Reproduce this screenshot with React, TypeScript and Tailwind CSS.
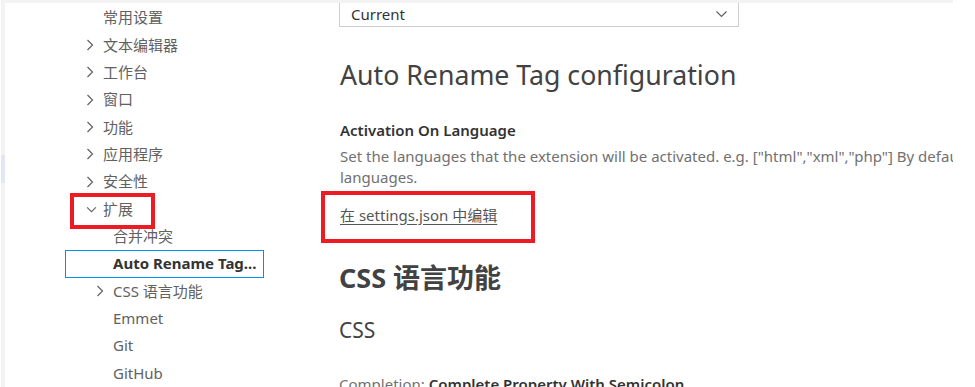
import type { ReactNode } from 'react';

const FONT = { fontFamily: '"Noto Sans", "Noto Sans CJK SC", sans-serif' };

function ChevronRight() {
  return (
    <svg width="8" height="12" viewBox="0 0 8 12" fill="none" stroke="currentColor" strokeWidth="1.2">
      <path d="M1.5 1 L6.5 6 L1.5 11" />
    </svg>
  );
}

function ChevronDown({ w = 12, h = 8 }: { w?: number; h?: number }) {
  return (
    <svg width={w} height={h} viewBox="0 0 12 8" fill="none" stroke="currentColor" strokeWidth="1.2">
      <path d="M1 1.5 L6 6.5 L11 1.5" />
    </svg>
  );
}

type Row = { label: string; level: 1 | 2; chevron?: 'right' | 'down'; selected?: boolean };

const rows: Row[] = [
  { label: '常用设置', level: 1 },
  { label: '文本编辑器', level: 1, chevron: 'right' },
  { label: '工作台', level: 1, chevron: 'right' },
  { label: '窗口', level: 1, chevron: 'right' },
  { label: '功能', level: 1, chevron: 'right' },
  { label: '应用程序', level: 1, chevron: 'right' },
  { label: '安全性', level: 1, chevron: 'right' },
  { label: '扩展', level: 1, chevron: 'down' },
  { label: '合并冲突', level: 2 },
  { label: 'Auto Rename Tag...', level: 2, selected: true },
  { label: 'CSS 语言功能', level: 2, chevron: 'right' },
  { label: 'Emmet', level: 2 },
  { label: 'Git', level: 2 },
  { label: 'GitHub', level: 2 },
];

function TocRow({ row }: { row: Row }) {
  const indent = row.level === 1 ? 'pl-[20px]' : 'pl-[30px]';
  return (
    <div
      className={`h-[27.5px] flex items-center ${indent} ${
        row.selected ? 'border border-[#0090f1]' : 'border border-transparent'
      }`}
    >
      <span className="w-[17px] flex items-center text-[#616161]">
        {row.chevron === 'right' && <ChevronRight />}
        {row.chevron === 'down' && <ChevronDown w={11} h={7} />}
      </span>
      <span
        className={`text-[15px] leading-none whitespace-nowrap ${
          row.selected ? 'font-bold text-[#333333]' : 'text-[#616161]'
        }`}
      >
        {row.label}
      </span>
    </div>
  );
}

function Section({ children, className = '' }: { children: ReactNode; className?: string }) {
  return <div className={className}>{children}</div>;
}

export default function App() {
  return (
    <div className="relative w-[975px] h-[387px] overflow-hidden bg-white" style={FONT}>
      <div className="w-[953px] h-full overflow-hidden flex flex-col">
        {/* top edge */}
        <div className="h-[3px] bg-[#f3f3f3] shrink-0 ml-[1px]" />

        <div className="flex flex-1 min-h-0">
          {/* left sash */}
          <div className="w-[4px] ml-[1px] flex flex-col shrink-0">
            <div className="h-[152px] bg-[#f3f3f3]" />
            <div className="h-[28px] bg-[#e4e6f1]" />
            <div className="flex-1 bg-[#f3f3f3]" />
          </div>

          {/* table of contents */}
          <div className="w-[199px] ml-[60px] pt-[1px] shrink-0 flex flex-col">
            {rows.map((r) => (
              <TocRow key={r.label} row={r} />
            ))}
          </div>

          {/* settings body */}
          <div className="ml-[75px] flex-1 min-w-0 flex flex-col">
            <div className="w-[400px] h-[26px] border border-t-0 border-[#cecece] flex items-center justify-between pl-[11px] pr-[10px] text-[15px] text-[#333]">
              <span>Current</span>
              <span className="text-[#616161]">
                <ChevronDown w={13} h={8} />
              </span>
            </div>

            <h1 className="mt-[30px] text-[26.7px] leading-[36px] text-[#424242] pl-[1px] whitespace-nowrap">
              Auto Rename Tag configuration
            </h1>

            <Section className="mt-[27px]">
              <div className="text-[15px] leading-[20px] font-semibold text-[#333] pl-[1px]">
                Activation On Language
              </div>
              <div className="mt-[6px] text-[15px] leading-[21px] text-[#717171] whitespace-nowrap pl-[1px]">
                <div>
                  Set the languages that the extension will be activated. e.g. ["html","xml","php"] By default, it is
                  ["*"] and will be activated for all
                </div>
                <div>languages.</div>
              </div>
              <div className="mt-[17px] text-[15px] leading-[20px] text-[#555] underline underline-offset-[3px] pl-[1px]">
                在 settings.json 中编辑
              </div>
            </Section>

            <h2 className="mt-[35px] text-[27px] leading-[36px] font-bold text-[#424242] whitespace-nowrap">
              CSS 语言功能
            </h2>
            <h3 className="mt-[20px] text-[21px] leading-[28px] text-[#424242]">CSS</h3>
            <div className="mt-[30px] text-[15px] leading-[20px] whitespace-nowrap">
              <span className="text-[#717171]">Completion: </span>
              <span className="font-semibold text-[#333]">Complete Property With Semicolon</span>
            </div>
          </div>
        </div>
      </div>

      {/* annotation boxes */}
      <div className="absolute left-[70px] top-[193px] w-[85px] h-[36px] border-4 border-[#ed1c24]" />
      <div className="absolute left-[321px] top-[191px] w-[214px] h-[52px] border-4 border-[#ed1c24]" />
    </div>
  );
}
